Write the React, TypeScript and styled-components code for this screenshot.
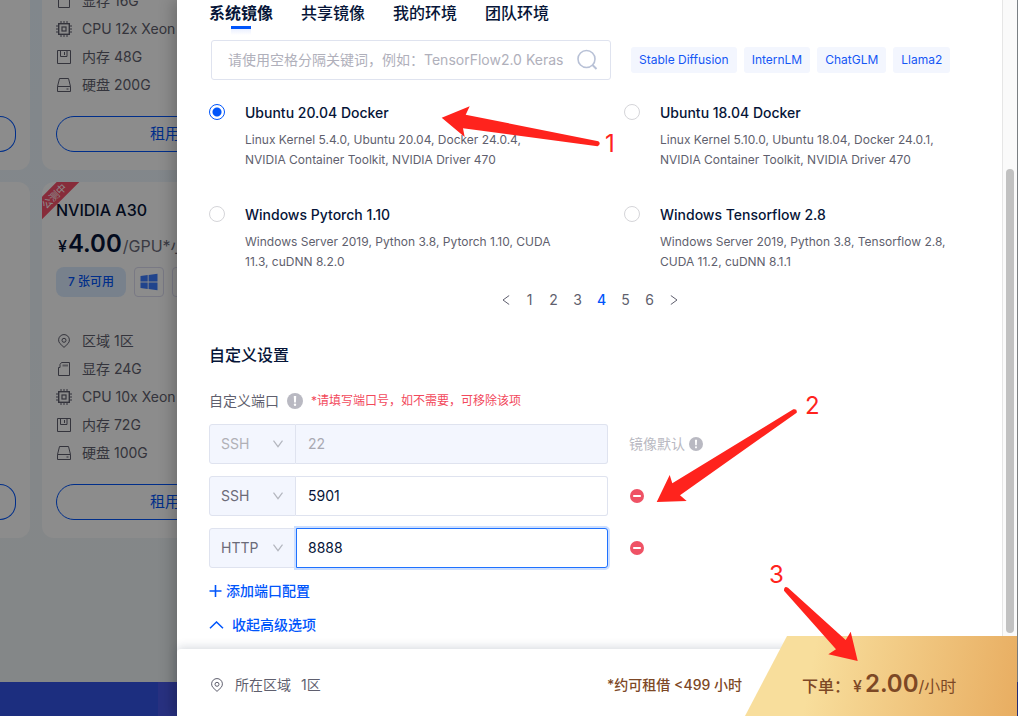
import React, { useState } from "react";
import styled, { createGlobalStyle, css } from "styled-components";

const GlobalStyle = createGlobalStyle`
  * { box-sizing: border-box; }
  html, body, #root { height: 100%; }
  body {
    margin: 0;
    overflow: hidden;
    font-family: Inter, "Noto Sans CJK SC", sans-serif;
    font-size: 14px;
    line-height: 20px;
    color: #5f5f6e;
  }
  button, input, select { font: inherit; color: inherit; margin: 0; }
  button { padding: 0; border: 0; background: none; cursor: pointer; }
  h2, h3, p { margin: 0; }
`;

const navy = "#061538";
const blue = "#0055fb";
const line = "#dfe3ef";
const pale = "#f3f6fe";

const Page = styled.div`
  position: relative;
  height: 100vh;
  overflow: hidden;
`;

/* ---------- GPU market page behind the drawer ---------- */

const Market = styled.div`
  display: flex;
  flex-direction: column;
  height: 100%;
  background: linear-gradient(#ecf6ff, #f1f6f8 80%);
`;

const CardGrid = styled.div`
  flex: 1;
  display: grid;
  grid-template-columns: 30px 246px;
  grid-template-rows: 170px 356px;
  gap: 12px;
`;

const Card = styled.article<{ $cut?: boolean; $top?: boolean }>`
  position: relative;
  display: flex;
  flex-direction: column;
  justify-content: flex-end;
  overflow: hidden;
  padding: 0 14px 18px;
  background: #fff;
  border-radius: ${(p) => (p.$top ? "0 0 12px 12px" : "12px")};
  ${(p) => p.$cut && css`
    padding-left: 0;
    border-top-left-radius: 0;
    border-bottom-left-radius: 0;
  `}
`;

const CardTitle = styled.h3`
  position: relative;
  z-index: 1;
  color: ${navy};
  font-size: 16px;
  font-weight: 500;
  line-height: 24px;
`;

const CardPrice = styled.p`
  display: flex;
  align-items: baseline;
  gap: 1px;
  padding-left: 2px;
  margin-top: 6px;
  white-space: nowrap;
  font-size: 16px;
  font-weight: 500;
  line-height: 32px;
  color: ${navy};
  strong { font-size: 24px; font-weight: 600; }
  span { color: #6b6b7a; font-weight: 400; }
`;

const ChipRow = styled.div`
  display: flex;
  gap: 8px;
  margin: 5px 0 30px;
`;

const Stock = styled.span`
  flex: none;
  padding: 0 12px;
  border-radius: 8px;
  background: #dbebff;
  color: ${blue};
  font-size: 12px;
  font-weight: 500;
  line-height: 30px;
`;

const SystemBox = styled.span`
  display: grid;
  place-items: center;
  flex: none;
  width: 30px;
  height: 30px;
  border: 1px solid #dcdcf0;
  border-radius: 4px;
`;

const Specs = styled.ul`
  margin: 0 0 17px;
  padding: 0;
  list-style: none;
`;

const Spec = styled.li`
  display: flex;
  align-items: center;
  gap: 10px;
  height: 28px;
  white-space: nowrap;
  svg { flex: none; }
`;

const RentButton = styled.button<{ $cut?: boolean }>`
  flex: none;
  height: 36px;
  border: 1px solid ${blue};
  border-radius: 18px;
  color: ${blue};
  font-size: 15px;
  ${(p) => p.$cut && css`
    border-left: 0;
    border-radius: 0 18px 18px 0;
  `}
`;

const Ribbon = styled.span`
  position: absolute;
  top: 6px;
  left: -28px;
  width: 80px;
  transform: rotate(-45deg);
  background: #f6506a;
  color: #fff;
  font-size: 10px;
  line-height: 16px;
  text-align: center;
`;

const MarketFooter = styled.div`
  height: 34px;
  background: linear-gradient(90deg, #3354e8 158px, #4a5aec 158px);
`;

const Mask = styled.div`
  position: absolute;
  inset: 0;
  z-index: 2;
  background: rgba(0, 0, 0, 0.45);
`;

/* ---------- Drawer ---------- */

const Drawer = styled.section`
  position: absolute;
  inset: 0 1px 0 177px;
  z-index: 3;
  display: flex;
  flex-direction: column;
  background: #fff;
  box-shadow: -4px 0 14px rgba(0, 0, 0, 0.22);
`;

const DrawerBody = styled.div`
  flex: 1;
  display: flex;
  min-height: 0;
`;

const Content = styled.div`
  flex: 1;
  min-width: 0;
  padding: 0 32px;
`;

const ScrollTrack = styled.div`
  flex: none;
  width: 15px;
  padding: 169px 3px 16px;
  background: #fafafa;
  border-left: 1px solid #e6e6e6;
`;

const ScrollThumb = styled.div`
  height: 100%;
  border-radius: 4px;
  background: #c1c1c1;
`;

const Tabs = styled.nav`
  display: flex;
  gap: 28px;
  height: 40px;
`;

const Tab = styled.button<{ $active?: boolean }>`
  display: flex;
  flex-direction: column;
  align-items: center;
  color: ${navy};
  font-size: 16px;
  line-height: 26px;
  font-weight: ${(p) => (p.$active ? 700 : 500)};
  ${(p) => p.$active && css`
    &::after {
      content: "";
      width: 20px;
      height: 9px;
      background: linear-gradient(${blue} 3px, #eaf0ff 3px, #fff);
    }
  `}
`;

const SearchRow = styled.div`
  display: flex;
  align-items: center;
  gap: 20px;
  margin-left: 2px;
`;

const SearchBox = styled.label`
  display: flex;
  align-items: center;
  width: 400px;
  height: 40px;
  padding: 0 12px 0 16px;
  border: 1px solid ${line};
  border-radius: 3px;
  input {
    flex: 1;
    min-width: 0;
    padding: 0;
    border: 0;
    outline: 0;
    background: none;
  }
  input::placeholder { color: #b0b0bb; opacity: 1; }
`;

const Tags = styled.div`
  display: flex;
  gap: 7px;
`;

const Tag = styled.button`
  height: 26px;
  padding: 0 8px;
  border-radius: 3px;
  background: ${pale};
  color: #1557f5;
  font-size: 12px;
  white-space: nowrap;
`;

const ImageGrid = styled.div`
  display: grid;
  grid-template-columns: 415px 1fr;
  gap: 34px 0;
  margin-top: 22px;
`;

const ImageOption = styled.label`
  display: flex;
  align-items: flex-start;
  gap: 20px;
  height: 68px;
`;

const Radio = styled.input`
  appearance: none;
  flex: none;
  width: 16px;
  height: 16px;
  margin: 2px 0 0;
  border: 1px solid #d5d5d9;
  border-radius: 50%;
  background: #fff;
  &:checked {
    border-color: ${blue};
    background: radial-gradient(circle, ${blue} 4px, #fff 5px);
  }
`;

const ImageText = styled.span`
  display: block;
  width: 310px;
  font-size: 12px;
  line-height: 20px;
  strong {
    display: block;
    margin-bottom: 6px;
    color: ${navy};
    font-size: 14px;
    font-weight: 500;
    line-height: 22px;
  }
`;

const Pager = styled.nav`
  display: flex;
  justify-content: center;
  margin-top: 16px;
`;

const PageButton = styled.button<{ $current?: boolean }>`
  display: grid;
  place-items: center;
  width: 24px;
  height: 24px;
  color: ${(p) => (p.$current ? blue : "#5f5f6e")};
  font-weight: ${(p) => (p.$current ? 500 : 400)};
`;

const SectionTitle = styled.h2`
  margin-top: 31px;
  color: ${navy};
  font-size: 16px;
  font-weight: 500;
  line-height: 24px;
`;

const PortHeading = styled.div`
  display: flex;
  align-items: center;
  gap: 8px;
  margin: 24px 0 13px;
  height: 20px;
`;

const Warning = styled.span`
  color: #f2495c;
  font-size: 12px;
`;

const PortList = styled.div`
  display: flex;
  flex-direction: column;
  gap: 12px;
  margin-bottom: 13px;
`;

const PortRow = styled.div`
  display: flex;
  align-items: center;
  gap: 21px;
`;

const PortGroup = styled.div`
  display: flex;
  width: 399px;
  height: 40px;
`;

const SelectWrap = styled.span<{ $disabled?: boolean }>`
  display: flex;
  align-items: center;
  width: 87px;
  padding-right: 12px;
  border: 1px solid ${line};
  border-radius: 3px 0 0 3px;
  background: ${pale};
  color: ${(p) => (p.$disabled ? "#b0b0b6" : "#6b6b78")};
  select {
    appearance: none;
    flex: 1;
    min-width: 0;
    height: 100%;
    padding: 0 0 0 11px;
    border: 0;
    outline: 0;
    background: none;
    opacity: 1;
  }
  svg { flex: none; }
`;

const PortInput = styled.input<{ $focus?: boolean }>`
  flex: 1;
  min-width: 0;
  padding: 0 11px;
  border: 1px solid ${line};
  border-left-width: ${(p) => (p.$focus ? "1px" : "0")};
  padding-left: ${(p) => (p.$focus ? "11px" : "12px")};
  border-radius: 0 3px 3px 0;
  background: #fff;
  color: ${navy};
  outline: 0;
  &:disabled { background: ${pale}; color: #a9a9b2; }
  ${(p) => p.$focus && css`
    border-color: #1f72ff;
    box-shadow: 0 0 0 2px #cddfff;
  `}
`;

const DefaultNote = styled.span`
  display: flex;
  align-items: center;
  gap: 4px;
  color: #b9b9c2;
`;

const IconButton = styled.button`
  display: grid;
  place-items: center;
  width: 16px;
  height: 16px;
`;

const LinkButton = styled.button<{ $gap: number }>`
  display: flex;
  align-items: center;
  gap: ${(p) => p.$gap}px;
  height: 20px;
  margin-bottom: 14px;
  color: ${blue};
  font-weight: 500;
`;

const DrawerFooter = styled.footer`
  flex: none;
  display: flex;
  align-items: center;
  height: 67px;
  padding-left: 32px;
  border-radius: 4px 4px 0 0;
  background: #fff;
  box-shadow: 0 -2px 10px rgba(20, 40, 70, 0.16);
`;

const Region = styled.span`
  display: flex;
  align-items: center;
  gap: 10px;
  margin-right: auto;
  padding-top: 4px;
`;

const Estimate = styled.span`
  padding: 4px 3px 0 0;
  color: #7d4825;
  font-weight: 500;
`;

const OrderButton = styled.button`
  display: flex;
  align-items: baseline;
  gap: 3px;
  flex: none;
  width: 272px;
  height: 80px;
  margin-top: -13px;
  padding: 32px 0 0 57px;
  color: #7d4825;
  font-size: 16px;
  font-weight: 500;
  line-height: 32px;
  white-space: nowrap;
  background: linear-gradient(100deg, #f8de9c 25%, #e8ad61);
  clip-path: polygon(42px 0, 100% 0, 100% 100%, 0 100%);
  strong { font-size: 24px; font-weight: 600; }
  small { font-size: 16px; font-weight: 400; margin-left: -3px; }
`;

const Annotations = styled.svg`
  position: absolute;
  top: 0;
  left: 0;
  z-index: 4;
  width: 1018px;
  height: 716px;
  pointer-events: none;
  fill: #ff231d;
  font-size: 24px;
`;

/* ---------- Icons ---------- */

const PinIcon = () => (
  <svg width="16" height="16" viewBox="0 0 16 16" fill="none" stroke="currentColor">
    <path d="M8 14.4 4 10.6a5.4 5.4 0 1 1 8 0Z" />
    <circle cx="8" cy="7.3" r="2" />
  </svg>
);
const VramIcon = () => (
  <svg width="16" height="16" viewBox="0 0 16 16" fill="none" stroke="currentColor">
    <path d="M5.500 1.500h8v13h-11v-8h1.500v-3Z" />
    <path d="M6.500 4.500h5.500" strokeWidth="2" opacity=".6" />
  </svg>
);
const CpuIcon = () => (
  <svg width="16" height="16" viewBox="0 0 16 16" fill="none" stroke="currentColor">
    <rect x="2.7" y="2.7" width="10.6" height="10.6" strokeWidth="1.4" />
    <rect x="6" y="6" width="4" height="4" strokeWidth="1.2" />
    <path d="M5 0v2M8 0v2M11 0v2M5 14v2M8 14v2M11 14v2M0 5h2M0 8h2M0 11h2M14 5h2M14 8h2M14 11h2" />
  </svg>
);
const MemoryIcon = () => (
  <svg width="16" height="16" viewBox="0 0 16 16" fill="none" stroke="currentColor">
    <path d="M1.500 1.500h13v13h-13ZM4.500 1.500v6h6.500v-6" />
    <path d="M8.500 3v3" />
  </svg>
);
const DiskIcon = () => (
  <svg width="16" height="16" viewBox="0 0 16 16" fill="none" stroke="currentColor">
    <path d="M3.500 1.500h9l2 8v5h-13v-5ZM1.500 9.500h13M10.500 12h2" />
  </svg>
);
const WindowsIcon = () => (
  <svg width="18" height="18" viewBox="0 0 18 18" fill="#3d7cff">
    <path d="M.5 3 7.700 2v6.600H.5ZM8.600 1.900 17.500.7v7.900H8.600ZM.5 9.500h7.200v6.600L.5 15ZM8.600 9.500h8.900v7.800l-8.900-1.200Z" />
  </svg>
);
const SearchIcon = () => (
  <svg width="22" height="22" viewBox="0 0 22 22" fill="none" stroke="#b8c1d6" strokeWidth="1.600">
    <circle cx="10.500" cy="10" r="8.500" />
    <path d="m16.500 16 4 4" strokeWidth="2" />
  </svg>
);
const InfoIcon = ({ size }: { size: number }) => (
  <svg width={size} height={size} viewBox="0 0 16 16">
    <circle cx="8" cy="8" r="8" fill="#b9b9c2" />
    <path d="M6.800 3h2.400l-.3 6.500H7.100Z" fill="#fff" />
    <circle cx="8" cy="11.800" r="1.200" fill="#fff" />
  </svg>
);
const MinusIcon = () => (
  <svg width="14" height="14" viewBox="0 0 14 14">
    <circle cx="7" cy="7" r="7" fill="#ef5265" />
    <path d="M3.200 7h7.600" stroke="#fff" strokeWidth="2" />
  </svg>
);
const ChevronDown = () => (
  <svg width="10" height="8" viewBox="0 0 10 8" fill="none" stroke="#b3b6be" strokeWidth="1.200">
    <path d="m.5.700 4.500 6 4.500-6" />
  </svg>
);
const ChevronUp = () => (
  <svg width="15" height="8" viewBox="0 0 15 8" fill="none" stroke="currentColor" strokeWidth="1.500">
    <path d="m1 7.300 6.500-6.300L14 7.300" />
  </svg>
);
const PlusIcon = () => (
  <svg width="13" height="12" viewBox="0 0 13 12" fill="none" stroke="currentColor" strokeWidth="1.600">
    <path d="M.5 6h12M6.500 0v12" />
  </svg>
);
const PagerArrow = ({ next }: { next?: boolean }) => (
  <svg width="8" height="10" viewBox="0 0 8 10" fill="none" stroke="currentColor">
    <path d={next ? "M.800.500 7 5 .800 9.500" : "M7.200.500 1 5l6.200 4.500"} />
  </svg>
);

/* ---------- Data ---------- */

const images = [
  { name: "Ubuntu 20.04 Docker", detail: "Linux Kernel 5.4.0, Ubuntu 20.04, Docker 24.0.4, NVIDIA Container Toolkit, NVIDIA Driver 470" },
  { name: "Ubuntu 18.04 Docker", detail: "Linux Kernel 5.10.0, Ubuntu 18.04, Docker 24.0.1, NVIDIA Container Toolkit, NVIDIA Driver 470" },
  { name: "Windows Pytorch 1.10", detail: "Windows Server 2019, Python 3.8, Pytorch 1.10, CUDA 11.3, cuDNN 8.2.0" },
  { name: "Windows Tensorflow 2.8", detail: "Windows Server 2019, Python 3.8, Tensorflow 2.8, CUDA 11.2, cuDNN 8.1.1" },
];

const ports = [
  { protocol: "SSH", port: "22", preset: true },
  { protocol: "SSH", port: "5901" },
  { protocol: "HTTP", port: "8888", focus: true },
];

export default function App() {
  const [selected, setSelected] = useState(0);
  return (
    <Page>
      <GlobalStyle />
      <Market>
        <CardGrid>
          <Card $cut $top><RentButton $cut aria-label="租用" /></Card>
          <Card $top>
            <Specs>
              <Spec><VramIcon />显存 16G</Spec>
              <Spec><CpuIcon />CPU 12x Xeon</Spec>
              <Spec><MemoryIcon />内存 48G</Spec>
              <Spec><DiskIcon />硬盘 200G</Spec>
            </Specs>
            <RentButton>租用</RentButton>
          </Card>
          <Card $cut><RentButton $cut aria-label="租用" /></Card>
          <Card>
            <Ribbon>公测中</Ribbon>
            <CardTitle>NVIDIA A30</CardTitle>
            <CardPrice>¥<strong>4.00</strong><span>/GPU*小时</span></CardPrice>
            <ChipRow>
              <Stock>7 张可用</Stock>
              <SystemBox><WindowsIcon /></SystemBox>
              <SystemBox />
            </ChipRow>
            <Specs>
              <Spec><PinIcon />区域 1区</Spec>
              <Spec><VramIcon />显存 24G</Spec>
              <Spec><CpuIcon />CPU 10x Xeon</Spec>
              <Spec><MemoryIcon />内存 72G</Spec>
              <Spec><DiskIcon />硬盘 100G</Spec>
            </Specs>
            <RentButton>租用</RentButton>
          </Card>
        </CardGrid>
        <MarketFooter />
      </Market>
      <Mask />

      <Drawer>
        <DrawerBody>
          <Content>
            <Tabs>
              {["系统镜像", "共享镜像", "我的环境", "团队环境"].map((t, i) => (
                <Tab key={t} $active={i === 0}>{t}</Tab>
              ))}
            </Tabs>
            <SearchRow>
              <SearchBox>
                <input aria-label="搜索镜像" placeholder="请使用空格分隔关键词，例如：TensorFlow2.0 Keras" />
                <SearchIcon />
              </SearchBox>
              <Tags>
                {["Stable Diffusion", "InternLM", "ChatGLM", "Llama2"].map((t) => <Tag key={t}>{t}</Tag>)}
              </Tags>
            </SearchRow>
            <ImageGrid>
              {images.map((image, i) => (
                <ImageOption key={image.name}>
                  <Radio type="radio" name="image" checked={selected === i} onChange={() => setSelected(i)} />
                  <ImageText><strong>{image.name}</strong>{image.detail}</ImageText>
                </ImageOption>
              ))}
            </ImageGrid>
            <Pager>
              <PageButton aria-label="上一页"><PagerArrow /></PageButton>
              {[1, 2, 3, 4, 5, 6].map((n) => <PageButton key={n} $current={n === 4}>{n}</PageButton>)}
              <PageButton aria-label="下一页"><PagerArrow next /></PageButton>
            </Pager>

            <SectionTitle>自定义设置</SectionTitle>
            <PortHeading>
              自定义端口
              <InfoIcon size={16} />
              <Warning>*请填写端口号，如不需要，可移除该项</Warning>
            </PortHeading>
            <PortList>
              {ports.map((p) => (
                <PortRow key={p.port}>
                  <PortGroup>
                    <SelectWrap $disabled={p.preset}>
                      <select aria-label="协议" defaultValue={p.protocol} disabled={p.preset}>
                        <option>SSH</option>
                        <option>HTTP</option>
                      </select>
                      <ChevronDown />
                    </SelectWrap>
                    <PortInput aria-label="端口号" defaultValue={p.port} disabled={p.preset} $focus={p.focus} />
                  </PortGroup>
                  {p.preset
                    ? <DefaultNote>镜像默认<InfoIcon size={14} /></DefaultNote>
                    : <IconButton aria-label="移除"><MinusIcon /></IconButton>}
                </PortRow>
              ))}
            </PortList>
            <LinkButton $gap={4}><PlusIcon />添加端口配置</LinkButton>
            <LinkButton $gap={8}><ChevronUp />收起高级选项</LinkButton>
          </Content>
          <ScrollTrack><ScrollThumb /></ScrollTrack>
        </DrawerBody>
        <DrawerFooter>
          <Region><PinIcon /><span>所在区域</span><span>1区</span></Region>
          <Estimate>*约可租借 &lt;499 小时</Estimate>
          <OrderButton><span>下单：</span><span>¥</span><strong>2.00</strong><small>/小时</small></OrderButton>
        </DrawerFooter>
      </Drawer>

      <Annotations viewBox="0 0 1018 716">
        <path d="M441.700 117.700 469.700 106.300 465.700 114.700 598.300 141.300Q601.500 143.600 597.500 146.300L463 128.300 464.700 137Z" />
        <text x="605" y="152">1</text>
        <path d="M656.700 502 669.700 475 672.300 483.300 793.300 409.300Q797.500 408.500 796.700 412.700L680 495.300 686.700 501Z" />
        <text x="805" y="414">2</text>
        <path d="M857.700 661 850.700 631.700 845.700 640 788 587.700Q784 585.500 784 590.700L836 649.300 828.300 654.300Z" />
        <text x="769" y="583">3</text>
      </Annotations>
    </Page>
  );
}
